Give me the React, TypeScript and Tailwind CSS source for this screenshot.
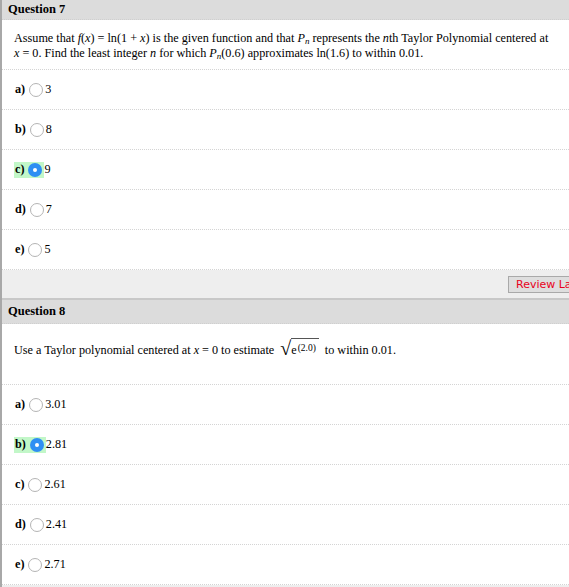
import React from 'react'

interface Option {
  label: string
  value: string
  selected?: boolean
}

const q7Options: Option[] = [
  { label: 'a)', value: '3' },
  { label: 'b)', value: '8' },
  { label: 'c)', value: '9', selected: true },
  { label: 'd)', value: '7' },
  { label: 'e)', value: '5' },
]

const q8Options: Option[] = [
  { label: 'a)', value: '3.01' },
  { label: 'b)', value: '2.81', selected: true },
  { label: 'c)', value: '2.61' },
  { label: 'd)', value: '2.41' },
  { label: 'e)', value: '2.71' },
]

function Radio({ checked }: { checked?: boolean }) {
  if (checked) {
    return (
      <span className="ml-[4px] mr-[2px] flex h-[14px] w-[14px] items-center justify-center rounded-full bg-[#2f8ff3]">
        <span className="h-[4px] w-[4px] rounded-full bg-white" />
      </span>
    )
  }
  return <span className="ml-[4px] mr-[2px] h-[14px] w-[14px] rounded-full border border-[#b4b4b4] bg-white" />
}

function OptionRow({ opt }: { opt: Option }) {
  return (
    <div className="flex h-[40px] items-center border-b border-dotted border-[#d4d4d4] pl-[12px]">
      <div className={`flex h-[16px] items-center pl-[1px] ${opt.selected ? 'bg-[#c2f7c8]' : ''}`}>
        <span className="font-bold">{opt.label}</span>
        <Radio checked={opt.selected} />
      </div>
      <span>{opt.value}</span>
    </div>
  )
}

function Header({ title, tall }: { title: string; tall?: boolean }) {
  return (
    <div
      className={`flex items-center border-b border-dotted border-[#cfcfcf] bg-[#dcdcdc] pl-[6px] text-[12.5px] font-bold ${
        tall ? 'h-[24px]' : 'h-[20px]'
      }`}
    >
      {title}
    </div>
  )
}

const I = ({ children }: { children: React.ReactNode }) => <i>{children}</i>
const Eq = () => <span className="mx-[3px]">=</span>

export default function App() {
  return (
    <div
      className="w-[569px] overflow-hidden border-l-2 border-[#a8a8a8] bg-white text-[12.2px] text-black"
      style={{ fontFamily: '"Liberation Serif", "Times New Roman", serif' }}
    >
      <Header title="Question 7" />
      <div className="border-b border-dotted border-[#d4d4d4] pt-[11px] pb-[8px] pl-[12px] pr-[6px] leading-[15px]">
        Assume that <I>f</I>(<I>x</I>)<Eq />ln(1 + <I>x</I>) is the given function and that <I>P</I>
        <sub className="text-[9px]"><I>n</I></sub> represents the <I>n</I>th Taylor Polynomial centered at{' '}
        <I>x</I><Eq />0. Find the least integer <I>n</I> for which <I>P</I>
        <sub className="text-[9px]"><I>n</I></sub>(0.6) approximates ln(1.6) to within 0.01.
      </div>
      {q7Options.map((o) => (
        <OptionRow key={o.label} opt={o} />
      ))}
      <div className="flex h-[28px] items-start justify-end bg-[#eeeeee] pt-[6px]">
        <button
          className="-mr-[30px] h-[17px] w-[91px] border border-[#a9a9a9] bg-[#dedede] pl-[7px] text-left text-[11px] leading-[14px] text-[#e8001c]"
          style={{ fontFamily: '"DejaVu Sans", Verdana, sans-serif' }}
        >
          Review Later
        </button>
      </div>
      <div className="h-[2px] bg-[#c8c8c8]" />
      <Header title="Question 8" tall />
      <div className="h-[61px] border-b border-dotted border-[#d4d4d4] pt-[14px] pl-[12px]">
        <div className="flex items-end leading-[15px]">
          <span>
            Use a Taylor polynomial centered at <I>x</I><Eq />0 to estimate
          </span>
          <span className="ml-[6px] flex items-end">
            <span className="text-[20px] leading-[20px]">√</span>
            <span className="flex items-end border-t border-[#555] pt-[4px] pr-[3px] leading-[15px]">
              e<span className="mb-[5px] ml-[1px] text-[9.5px] leading-[10px]">(2.0)</span>
            </span>
          </span>
          <span className="ml-[6px]">to within 0.01.</span>
        </div>
      </div>
      {q8Options.map((o) => (
        <OptionRow key={o.label} opt={o} />
      ))}
      <div className="h-[10px] bg-[#eeeeee]" />
    </div>
  )
}
